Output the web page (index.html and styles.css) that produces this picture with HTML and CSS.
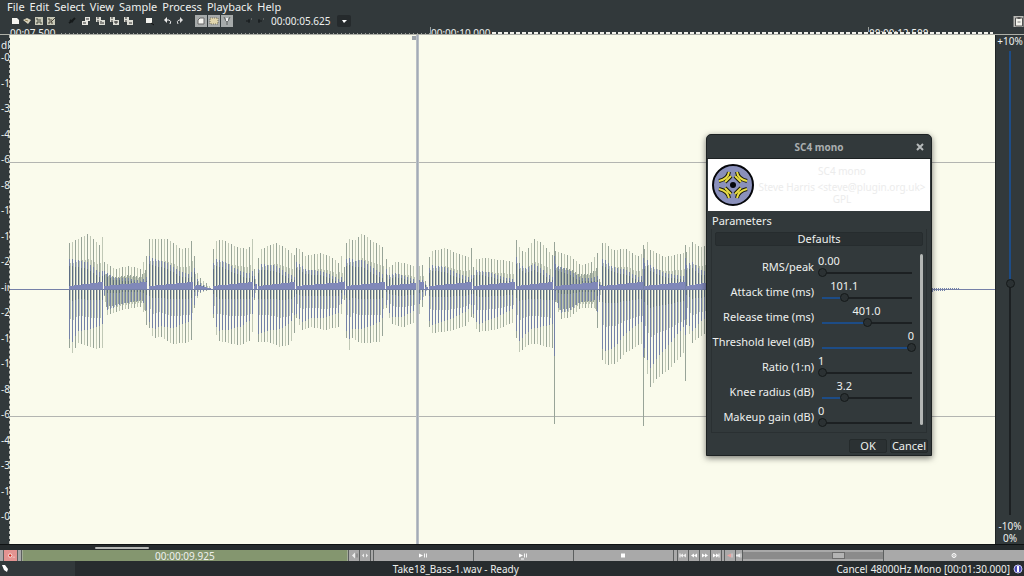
FILE: index.html
```html
<!DOCTYPE html>
<html lang="en">
<head>
    <meta charset="UTF-8">
    <meta name="viewport" content="width=device-width, initial-scale=1.0">
    <title>Take18_Bass-1.wav</title>
    <link rel="stylesheet" href="styles.css">
</head>
<body>
    <nav class="menubar">
        <button>File</button>
        <button>Edit</button>
        <button>Select</button>
        <button>View</button>
        <button>Sample</button>
        <button>Process</button>
        <button>Playback</button>
        <button>Help</button>
    </nav>

    <div class="toolbar">
        <div class="tools">
            <button aria-label="New"><svg viewBox="0 0 12 10"><path d="M3 2h5l2 2v4H3z" fill="#f4f4f0"/></svg></button>
            <button aria-label="Open"><svg viewBox="0 0 12 10"><path d="M2 4l4-2 4 2-3 4z" fill="#d8d3bd"/><path d="M4 4l3 1" stroke="#8d7b52"/></svg></button>
            <button aria-label="Save"><svg viewBox="0 0 12 10"><path d="M2 1h8v8H2z" fill="#c9c9b8"/><path d="M4 2v2h4M4 8V6h4v2" stroke="#454b40" fill="none"/></svg></button>
            <button aria-label="Save as"><svg viewBox="0 0 12 10"><path d="M2 1h8v8H2z" fill="#c9c9b8"/><path d="M4 2v2h3M4 8V6h3v2M6 6l4-4" stroke="#4a463a" fill="none"/></svg></button>
        </div>
        <div class="tools edit">
            <button aria-label="Cut"><svg viewBox="0 0 12 10"><path d="M3 7l3-2 3-3M4 4l3 2" stroke="#15191a" stroke-width="2" fill="none"/></svg></button>
            <button aria-label="Copy"><svg viewBox="0 0 12 10"><path d="M5 1h5v4H5zM2 5h6v4H2z" fill="#e6e6e0"/><path d="M3 7h3M6 3h3" stroke="#333"/></svg></button>
            <button aria-label="Paste"><svg viewBox="0 0 12 10"><path d="M2 1h5v5H2zM5 4h6v5H5z" fill="#dcdcd4"/><path d="M4 1v2M7 5v3M9 6v2M3 5h2" stroke="#333"/></svg></button>
            <button aria-label="Paste over"><svg viewBox="0 0 12 10"><path d="M2 1h5v5H2zM5 4h6v5H5z" fill="#dcdcd4"/><path d="M4 1v2M6 6h4M8 5v3M3 5h2" stroke="#333"/></svg></button>
            <button aria-label="Mix paste"><svg viewBox="0 0 12 10"><path d="M2 1h5v5H2zM5 4h6v5H5z" fill="#dcdcd4"/><path d="M4 1v2M7 7h3M3 5h2" stroke="#333"/></svg></button>
        </div>
        <div class="tools crop">
            <button aria-label="Crop"><svg viewBox="0 0 12 10"><path d="M3 2h6v5H3z" fill="#f2f2ee"/><path d="M8 7l3 2" stroke="#111"/></svg></button>
        </div>
        <div class="tools">
            <button aria-label="Undo"><svg viewBox="0 0 12 10"><path d="M4 4h3q3 1 1 4" stroke="#eee" fill="none"/><path d="M2 4l3-3v6z" fill="#eee"/></svg></button>
            <button aria-label="Redo"><svg viewBox="0 0 12 10"><path d="M8 4H5Q2 5 4 8" stroke="#ddd" fill="none"/><path d="M9 4L6 1v6z" fill="#ddd"/></svg></button>
        </div>
        <div class="tools toggles">
            <button aria-label="Snap"><svg viewBox="0 0 12 10"><path d="M3 8V4l2-2h4v6z" fill="#f4f4f0" stroke="#666"/></svg></button>
            <button aria-label="Select all"><svg viewBox="0 0 12 10"><path d="M2 2h8v6H2z" fill="#e0d5ac" stroke="#756f5b" stroke-dasharray="1 1"/></svg></button>
            <button aria-label="Follow"><svg viewBox="0 0 12 10"><path d="M3 1l2 4h2l2-4M6 5v4" stroke="#5d6060" fill="none"/><path d="M5 2h2v3H5z" fill="#eee"/></svg></button>
        </div>
        <div class="tools marks">
            <button aria-label="Previous mark"><svg viewBox="0 0 12 10"><path d="M3 5h4M6 3v4" stroke="#14181a"/><path d="M8 3h1" stroke="#888"/></svg></button>
            <button aria-label="Next mark"><svg viewBox="0 0 12 10"><path d="M3 5h4M4 3v4" stroke="#14181a"/><path d="M8 3h1" stroke="#888"/></svg></button>
        </div>
        <input class="time" type="text" aria-label="Position" value="00:00:05.625">
        <button class="drop" aria-label="Choose position"><svg viewBox="0 0 12 10"><path d="M4 4h5L6 7z" fill="#fff"/></svg></button>
        <button class="clip" aria-label="Clipboard"><svg viewBox="0 0 10 11"><path d="M0 0h10v11H0z" fill="#b9b9b5"/><path d="M2 2h7v8H2z" fill="#f3f3ec" stroke="#555"/><path d="M4 1h3v2H4z" fill="#555"/><path d="M4 6h3" stroke="#777"/></svg></button>
    </div>

    <div class="timeline">
        <span>00:07.500</span>
        <span>00:00:10.000</span>
        <span>00:00:12.500</span>
        <div class="dots"></div>
        <div class="ticks"></div>
    </div>

    <main class="editor">
        <div class="levels">
            <span>dB</span>
            <div class="scale">
                <span>-0</span><span>-1</span><span>-3</span><span>-4</span><span>-6</span><span>-8</span>
                <span>-1</span><span>-1</span><span>-2</span><span>-in</span><span>-2</span><span>-1</span>
                <span>-1</span><span>-8</span><span>-6</span><span>-4</span><span>-3</span><span>-1</span><span>-0</span>
            </div>
        </div>
        <svg class="wave" id="wave" viewBox="0 0 985 510" preserveAspectRatio="none" shape-rendering="crispEdges"></svg>
        <div class="speed">
            <label for="speed">+10%</label>
            <input id="speed" type="range" min="-10" max="10" value="0">
            <span>-10%</span>
            <output for="speed">0%</output>
        </div>
    </main>

    <div class="scroll"><div class="scroll-thumb"></div></div>

    <div class="transport">
        <i class="grip"></i>
        <button class="rec" aria-label="Record"><svg viewBox="0 0 12 10"><circle cx="5" cy="5" r="2" fill="#d02818" stroke="#fff"/><path d="M8 7h3" stroke="#f6caca"/></svg></button>
        <i class="grip"></i>
        <div class="meter">00:00:09.925</div>
        <button class="small" aria-label="Sound"><svg viewBox="0 0 10 10"><path d="M3 5l3-3v6z" fill="#eee"/><path d="M8 3v4" stroke="#777"/></svg></button>
        <button class="small" aria-label="Loop"><svg viewBox="0 0 10 10"><path d="M2 5l2-2v4zM8 5L6 3v4z" fill="#eee"/></svg></button>
        <i class="grip thin"></i>
        <button class="wide" aria-label="Play"><svg viewBox="0 0 10 10"><path d="M1 3l4 2-4 2z" fill="#fff"/><path d="M6 3h1v4H6zM8 3h1v4H8z" fill="#f5f5f5"/></svg></button>
        <button class="wide" aria-label="Play selection"><svg viewBox="0 0 10 10"><path d="M1 3l4 2-4 2zM3 8h3v1H3z" fill="#fff"/><path d="M6 3h1v4H6zM8 3h1v4H8z" fill="#f5f5f5"/></svg></button>
        <button class="wide" aria-label="Stop"><svg viewBox="0 0 10 10"><path d="M3 3h4v4H3z" fill="#fff"/></svg></button>
        <i class="grip"></i>
        <button class="small" aria-label="To start"><svg viewBox="0 0 10 10"><path d="M2 3v4" stroke="#fff"/><path d="M2 5l3-2v4zM5 5l3-2v4z" fill="#eee"/></svg></button>
        <button class="small" aria-label="Rewind"><svg viewBox="0 0 10 10"><path d="M2 5l3-2v4zM5 5l3-2v4z" fill="#fff"/></svg></button>
        <button class="small" aria-label="Forward"><svg viewBox="0 0 10 10"><path d="M8 5L5 3v4zM5 5L2 3v4z" fill="#fff"/></svg></button>
        <button class="small" aria-label="To end"><svg viewBox="0 0 10 10"><path d="M8 5L5 3v4zM5 5L2 3v4z" fill="#fff"/><path d="M8 3v4" stroke="#fff"/></svg></button>
        <i class="grip thin"></i>
        <button class="small" aria-label="Mute"><svg viewBox="0 0 10 10"><path d="M2 5l4-2v4z" fill="#e9a3a0"/><path d="M7 3v4" stroke="#e6d5d5"/></svg></button>
        <svg class="speaker" viewBox="0 0 6 10"><path d="M0 4h2l2-1v4L2 6H0z" fill="#eee"/><path d="M5 3v4" stroke="#ddd"/></svg>
        <input class="volume" type="range" aria-label="Volume" min="0" max="100" value="70">
        <button class="wide last" aria-label="Follow playback"><svg viewBox="0 0 10 10"><circle cx="5" cy="5" r="2" fill="none" stroke="#fff"/><path d="M5 4v2" stroke="#fff"/></svg></button>
    </div>

    <footer class="status">
        <div class="task"><svg viewBox="0 0 10 10"><path d="M2 2l3 0 3 4-1 3-3-2z" fill="#fff"/></svg></div>
        <p>Take18_Bass-1.wav - Ready</p>
        <div class="info">
            <button>Cancel</button>
            <span>48000Hz Mono [00:01:30.000]</span>
            <svg viewBox="0 0 10 10"><circle cx="5" cy="5" r="4" fill="#4a4ab8" stroke="#c3c3ee"/><path d="M5 2v6" stroke="#fff" stroke-width="2"/></svg>
        </div>
    </footer>

    <section class="dialog" role="dialog" aria-labelledby="dialog-title">
        <header>
            <h1 id="dialog-title">SC4 mono</h1>
            <button aria-label="Close"><svg viewBox="0 0 10 10"><path d="M2 2l6 6M8 2L2 8" stroke="#b6babb" stroke-width="2"/></svg></button>
        </header>
        <div class="about">
            <svg viewBox="0 0 42 42">
                <defs>
                    <g id="blade" fill="none">
                        <path d="M17 8q-1 7-10 9M19 12l-6 6" stroke="#171708" stroke-width="4"/>
                        <path d="M17 8q-1 7-10 9M19 12l-6 6" stroke="#e8dc44" stroke-width="2"/>
                    </g>
                </defs>
                <circle cx="21" cy="21" r="20" fill="#8a90bb" stroke="#05060a" stroke-width="2"/>
                <circle cx="21" cy="21" r="3" fill="#05060a"/>
                <use href="#blade"/>
                <use href="#blade" transform="matrix(-1 0 0 1 42 0)"/>
                <use href="#blade" transform="matrix(1 0 0 -1 0 42)"/>
                <use href="#blade" transform="matrix(-1 0 0 -1 42 42)"/>
            </svg>
            <div>
                <p class="name">SC4 mono</p>
                <p>Steve Harris &lt;steve@plugin.org.uk&gt;</p>
                <p>GPL</p>
            </div>
        </div>
        <h2>Parameters</h2>
        <div class="frame">
            <button class="defaults">Defaults</button>
            <div class="list">
                <div class="params" id="params"></div>
                <div class="bar"></div>
            </div>
        </div>
        <div class="actions">
            <button>OK</button>
            <button>Cancel</button>
        </div>
    </section>

    <script src="wave.js"></script>
</body>
</html>
```
FILE: styles.css
```css
* {
    box-sizing: border-box;
    margin: 0;
    padding: 0;
}

body {
    display: flex;
    flex-direction: column;
    height: 100vh;
    position: relative;
    overflow: hidden;
    background: #32393b;
    color: #eef0ee;
    font-family: "Noto Sans", "Open Sans", sans-serif;
    font-size: 11px;
    line-height: 12px;
}

button, input {
    font: inherit;
    color: inherit;
    background: none;
    border: 0;
}

svg {
    display: block;
}

/* menu and tools */
.menubar {
    display: flex;
    gap: 5px;
    height: 15px;
    padding: 1px 7px 2px;
}

.toolbar {
    display: flex;
    align-items: center;
    height: 12px;
    padding-left: 9px;
}

.tools {
    display: flex;
}

.tools svg {
    width: 12px;
    height: 10px;
}

.tools.edit {
    gap: 2px;
    margin-left: 9px;
}

.tools.crop {
    margin: 0 7px 0 9px;
}

.tools.toggles {
    gap: 1px;
    margin: 0 10px 0 9px;
}

.toggles button {
    padding: 1px 0;
    background: #a6aaaa;
}

.time {
    width: 66px;
    margin-left: 4px;
    height: 12px;
    font-size: 10px;
}

.drop {
    padding: 1px;
    background: #252a2c;
    border-radius: 2px;
}

.drop svg {
    width: 12px;
    height: 10px;
}

.clip {
    margin-left: auto;
}

.clip svg {
    width: 11px;
    height: 11px;
}

.timeline {
    display: grid;
    grid-template-columns: 420fr 438fr 127fr;
    height: 8px;
    padding: 0 29px 0 10px;
    position: relative;
    overflow: hidden;
    border-bottom: 1px solid #aeb0a8;
    font-size: 10px;
}

.timeline span {
    border-left: 1px solid #9ca09c;
}

.timeline span:first-child {
    border: 0;
}

.dots, .ticks {
    position: absolute;
    bottom: 0;
    height: 1px;
}

.dots {
    left: 6%;
    right: 58%;
    background: repeating-linear-gradient(90deg, #9a9e9a 0 1px, #32393b 1px 4px);
}

.ticks {
    left: 48%;
    right: 31px;
    height: 2px;
    background: repeating-linear-gradient(90deg, #f0f0ea 0 4px, #32393b 4px 6px);
}

/* wave area */
.editor {
    display: flex;
    flex: 1;
    min-height: 0;
}

.levels {
    display: flex;
    flex-direction: column;
    width: 10px;
    padding: 4px 0 22px 1px;
    overflow: hidden;
    border-right: 1px dashed #c0c2bc;
    font-size: 10px;
    white-space: nowrap;
}

.scale {
    display: flex;
    flex: 1;
    flex-direction: column;
    justify-content: space-between;
}

.wave {
    flex: 1;
    min-width: 0;
    height: 100%;
    background: #fafbec;
}

.speed {
    display: flex;
    flex-direction: column;
    align-items: center;
    width: 29px;
    border-left: 1px solid #202526;
    font-size: 10px;
}

.speed label {
    padding-bottom: 4px;
}

.speed input {
    flex: 1;
    min-height: 0;
    width: 11px;
    appearance: none;
    writing-mode: vertical-lr;
    direction: rtl;
    background: linear-gradient(#1d4c86 50%, #1c2022 50%) center / 2px 100% no-repeat;
}

.speed span {
    padding-top: 5px;
}

input[type="range"]::-webkit-slider-thumb {
    appearance: none;
    width: 9px;
    height: 9px;
    border: 1px solid #15191a;
    border-radius: 50%;
    background: #2b3133;
}

.scroll {
    height: 6px;
    padding: 2px 30px 0 95px;
    background: #262b2d;
    border-top: 1px solid #0f1213;
}

.scroll-thumb {
    width: 6%;
    height: 2px;
    border-radius: 1px;
    background: #b7b9b6;
}

/* transport */
.transport {
    display: flex;
    gap: 1px;
    height: 11px;
    background: #5c5f5f;
}

.transport button {
    display: flex;
    justify-content: center;
    background: #a9a9a9;
}

.transport svg {
    width: 10px;
    height: 11px;
}

.grip {
    width: 3px;
    background: #a9a9a9;
}

.grip.thin {
    width: 2px;
}

.transport .rec {
    width: 13px;
    background: #e39391;
}

.meter {
    flex: 327;
    background: #84966f;
    border: 1px solid #a3ad96;
    border-width: 0 1px;
    font-size: 10px;
    line-height: 12px;
    text-align: center;
}

.small {
    width: 10px;
}

.wide {
    flex: 100;
}

.wide.last {
    flex: 141;
}

.transport .speaker {
    width: 6px;
    background: #a9a9a9;
}

.volume {
    flex: 142;
    min-width: 0;
    height: 11px;
    appearance: none;
    background: #8b8b8b;
    border: 2px solid #a9a9a9;
    border-width: 2px 0;
}

.transport .volume::-webkit-slider-thumb {
    width: 13px;
    height: 7px;
    border: 1px solid #6c6c6c;
    border-radius: 0;
    background: #b4b4b4;
}

.status {
    display: flex;
    height: 15px;
    background: #272c2e;
    font-size: 10px;
    line-height: 16px;
}

.task {
    width: 75px;
    background: #32393b;
}

.status svg {
    width: 10px;
    height: 10px;
}

.task svg {
    margin-top: 2px;
}

.status p {
    flex: 1;
    text-align: center;
}

.info {
    display: flex;
    align-items: center;
    gap: 3px;
    padding-right: 1px;
}

/* plugin window */
.dialog {
    position: absolute;
    top: 134px;
    right: 92px;
    width: 226px;
    background: #32393b;
    border: 1px solid #1d2223;
    border-radius: 5px 5px 0 0;
    box-shadow: 0 2px 6px #0008;
}

.dialog header {
    display: flex;
    align-items: center;
    height: 24px;
    padding-right: 6px;
    border-bottom: 1px solid #1d2223;
}

.dialog h1 {
    flex: 1;
    padding-left: 16px;
    color: #a9aeaf;
    font-size: 10px;
    text-align: center;
}

.dialog header svg {
    width: 10px;
    height: 10px;
}

.about {
    display: flex;
    align-items: center;
    height: 52px;
    margin: 0 1px;
    padding-left: 4px;
    background: #fff;
    color: #ececec;
    text-align: center;
}

.about svg {
    flex: none;
    width: 42px;
    height: 42px;
}

.about div {
    flex: 1;
    font-size: 10px;
    white-space: nowrap;
}

.about .name {
    margin-bottom: 4px;
}

.dialog h2 {
    padding: 4px 5px 2px;
    font-size: 11px;
    font-weight: normal;
}

.frame {
    margin: 0 4px;
    padding: 3px 3px 3px 0;
    border: 1px solid #2a3032;
    border-top: 0;
}

.defaults {
    display: block;
    width: calc(100% - 3px);
    height: 14px;
    margin-left: 3px;
    background: #2a3032;
    border: 1px solid #262c2e;
    border-radius: 2px;
    line-height: 12px;
}

.list {
    display: flex;
    gap: 4px;
    padding-top: 8px;
}

.params {
    flex: 1;
}

.param {
    display: grid;
    grid-template-columns: 1fr 98px;
    align-items: center;
    column-gap: 4px;
    height: 25px;
}

.param label {
    text-align: right;
    white-space: nowrap;
}

.slot {
    position: relative;
    padding-top: 12px;
}

.slot output {
    position: absolute;
    top: 0;
    left: calc(4px + (100% - 9px) * var(--at));
    transform: translateX(-50%);
}

.slot output.start {
    left: 0;
    transform: none;
}

.slot input {
    display: block;
    width: 100%;
    height: 11px;
    appearance: none;
    background:
        linear-gradient(#1d4c86, #1d4c86) 4px center / calc((100% - 9px) * var(--at)) 2px no-repeat,
        linear-gradient(#1c2022, #1c2022) center / calc(100% - 8px) 2px no-repeat;
}

.bar {
    width: 3px;
    margin-bottom: 4px;
    border-radius: 2px;
    background: #b4b7b5;
}

.actions {
    display: flex;
    justify-content: flex-end;
    gap: 3px;
    padding: 6px 3px 2px;
}

.actions button {
    width: 38px;
    height: 14px;
    background: #2b3133;
    border: 1px solid #242a2b;
    border-radius: 2px;
    line-height: 12px;
}
```
FILE: wave.js
```javascript
// label, shown value, slider position 0..1
const params = [
    ["RMS/peak", "0.00", 0],
    ["Attack time (ms)", "101.1", 0.25],
    ["Release time (ms)", "401.0", 0.5],
    ["Threshold level (dB)", "0", 1],
    ["Ratio (1:n)", "1", 0],
    ["Knee radius (dB)", "3.2", 0.25],
    ["Makeup gain (dB)", "0", 0]
];

document.getElementById("params").innerHTML = params.map(([name, value, at], i) => `
    <div class="param">
        <label for="p${i}">${name}</label>
        <div class="slot" style="--at: ${at}">
            <output for="p${i}" class="${at === 0 ? "start" : ""}">${value}</output>
            <input id="p${i}" type="range" min="0" max="1" step="0.01" value="${at}">
        </div>
    </div>`).join("");

// one entry per note: peaks above and below the zero line as [x, height]
const notes = [
    { up: [[59,46],[78,55],[89,44],[92,52]], down: [[59,60],[62,65],[68,55],[85,61],[92,60]] },
    { dense: true, up: [[94,27],[105,20],[118,23],[130,20],[136,33]], down: [[94,8],[96,27],[105,24],[120,20],[132,19],[136,37]] },
    { up: [[139,50],[156,50],[162,47],[170,40],[179,41],[182,51]], down: [[139,40],[143,51],[150,48],[162,56],[180,54],[182,50]] },
    { up: [[184,33],[187,16],[190,11],[200,2]], down: [[184,20],[187,10],[190,5],[200,2]] },
    { up: [[203,40],[205,48],[212,49],[225,43],[238,39],[242,50]], down: [[203,30],[207,52],[220,56],[230,57],[240,52],[242,44]] },
    { up: [[244,20],[246,16]], down: [[244,12],[246,8]] },
    { up: [[248,31],[251,40],[265,46],[275,41],[284,34]], down: [[248,54],[258,54],[270,59],[280,56],[284,45]] },
    { up: [[286,41],[290,40],[295,33],[310,36],[320,33],[328,26],[330,36],[334,22]], down: [[286,30],[291,42],[300,39],[315,42],[328,39],[334,12]] },
    { up: [[336,46],[338,50],[345,49],[352,56],[360,49],[374,41]], down: [[336,50],[339,62],[342,50],[350,55],[371,54],[374,37]] },
    { up: [[376,30],[378,21],[385,27],[395,26],[405,22],[413,24]], down: [[376,20],[381,36],[393,39],[405,34],[413,17]] },
    { up: [[415,8],[417,6]], down: [[415,8],[417,4]] },
    { up: [[419,32],[422,38],[435,41],[445,36],[458,32],[461,41]], down: [[419,39],[422,45],[440,43],[455,38],[461,29]] },
    { up: [[463,22],[466,30],[475,31],[504,27]], down: [[463,30],[467,44],[485,42],[504,34]] },
    { up: [[506,49],[510,39],[516,37],[523,50],[530,47],[542,34]], down: [[506,50],[509,64],[515,59],[522,55],[542,60]] },
    { dense: true, up: [[545,38],[560,33],[570,24],[580,26],[587,36]], down: [[545,14],[550,31],[560,29],[570,20],[584,20],[587,40]] },
    { up: [[589,10],[591,14]], down: [[589,14],[591,12]] },
    { up: [[592,46],[594,47],[602,39],[617,40],[627,32],[632,36]], down: [[592,72],[596,77],[605,76],[615,65],[625,59],[632,55]] },
    { up: [[634,40],[637,47],[640,39],[655,32],[674,36]], down: [[634,70],[636,82],[640,99],[647,90],[658,82],[674,64]] },
    { up: [[676,37],[682,47],[690,41],[700,47]], down: [[676,37],[682,55],[690,48],[700,44]] }
];

const spikes = [[544, 47, 136], [633, 44, 138], [675, 44, 93]];
const zero = 254;

function at(points, x) {
    if (x <= points[0][0]) return points[0][1];
    for (let i = 1; i < points.length; i++) {
        const [x0, y0] = points[i - 1];
        const [x1, y1] = points[i];
        if (x <= x1) return y0 + (y1 - y0) * (x - x0) / (x1 - x0);
    }
    return points[points.length - 1][1];
}

function bar(x, up, down) {
    up = Math.round(up);
    down = Math.round(down);
    return `M${x} ${zero - up}h1v${up + down}h-1z`;
}

let pale = "", soft = "", mid = "", dark = "", blue = "";

notes.forEach(note => {
    const start = note.up[0][0];
    const end = note.up[note.up.length - 1][0];
    for (let x = start; x <= end; x++) {
        const t = (x - start) / Math.max(1, end - start);
        const up = at(note.up, x);
        const down = at(note.down, x);
        const step = (x - start) % 3;
        if (step === 0) {
            if ((x - start) % 2) pale += bar(x, up, down);
            else soft += bar(x, up, down);
            mid += bar(x, up * (0.65 - 0.3 * t), down * (0.85 - 0.25 * t));
            dark += bar(x, up * (0.5 - 0.25 * t), down * 0.2);
        } else if (step === 1) {
            pale += bar(x, up * 0.55, down * (note.dense ? 0.8 : 0.5));
        } else if (note.dense) {
            soft += bar(x, up * 0.6, down * 0.7);
        }
        blue += bar(x, Math.min(up * 0.3, 3 + 4 * t), Math.min(down * 0.1, 2));
    }
});

spikes.forEach(([x, up, down]) => {
    soft += bar(x, up, down);
    mid += bar(x, up * 0.7, down * 0.5);
});

// tail of the last note
for (let x = 918; x < 950; x += 2) {
    mid += bar(x, 1, 1 + 3 * (950 - x) / 32);
}

document.getElementById("wave").innerHTML = `
    <path d="M0 127h985v1H0zM0 382h985v1H0z" fill="#b3b5b1"/>
    <path d="${pale}" fill="#c0c8b6"/>
    <path d="${soft}" fill="#98a498"/>
    <path d="${mid}" fill="#7482a8"/>
    <path d="${dark}" fill="#5c6d84"/>
    <path d="${blue}" fill="#8088b9"/>
    <path d="M0 254h985v1H0z" fill="#7580a8"/>
    <path d="M406 0h3v510h-3z" fill="#b9bfc5"/>
    <path d="M407 0h1v510h-1z" fill="#a3abb6"/>
    <path d="M402 1h4v4h-4z" fill="#9ba2a8"/>`;
```
